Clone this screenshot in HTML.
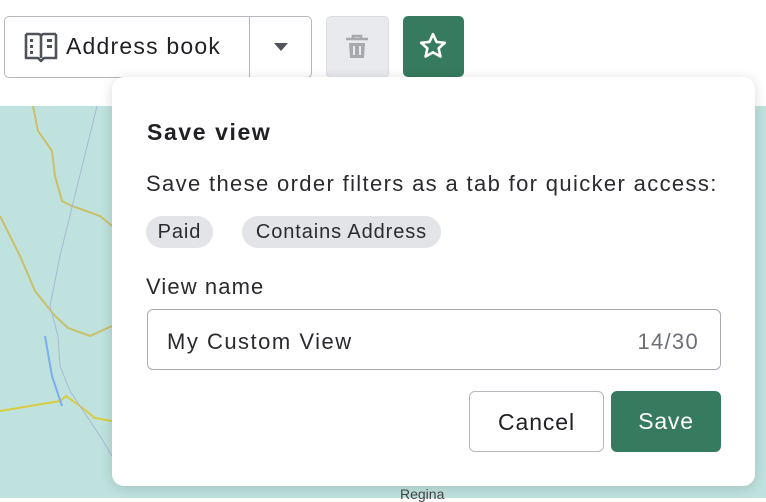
<!DOCTYPE html>
<html><head><style>
*{box-sizing:border-box;margin:0;padding:0}
body{width:766px;height:498px;overflow:hidden;background:#fff;font-family:"Liberation Sans",sans-serif;position:relative;color:#202124}
.map{position:absolute;left:0;top:106px;width:766px;height:392px;background:#bfe2de}
.btn{position:absolute;border-radius:5px}
.pop{position:absolute;left:112px;top:77px;width:643px;height:409px;background:#fff;border-radius:12px;box-shadow:0 2px 12px rgba(0,0,0,.15)}
.t{position:absolute;white-space:nowrap}
.chip{position:absolute;top:139px;height:32px;background:#e3e4e8;border-radius:16px;font-size:20px;line-height:32px;text-align:center;color:#2a2b2e;letter-spacing:0.9px}
</style></head><body>
<div class="map">
<svg width="766" height="392" style="position:absolute;left:0;top:0">
<path d="M33 0 L38 25 L52 45 L55 70 L62 95 L72 100 L100 110 L112 120" stroke="#c9c068" stroke-width="2" fill="none"/>
<path d="M0 110 L20 150 L35 185 L55 210 L68 222 L90 230 L112 220" stroke="#c9c068" stroke-width="2" fill="none"/>
<path d="M0 305 L30 300 L60 295 L66 290 L80 300 L95 312 L112 315" stroke="#d9cc40" stroke-width="2" fill="none"/>
<path d="M97 0 L60 150 L50 200 L58 230 L60 260 L70 285 L80 300 L100 330 L112 350" stroke="#a9b8d8" stroke-width="1" fill="none"/>
<path d="M45 230 L52 270 L62 300" stroke="#7aaef0" stroke-width="2" fill="none"/>
</svg>
</div>
<div class="btn" style="left:4px;top:16px;width:308px;height:62px;border:1px solid #b6b8bf;background:#fff"></div>
<div style="position:absolute;left:249px;top:17px;width:1px;height:60px;background:#b6b8bf"></div>
<svg style="position:absolute;left:24px;top:31px" width="34" height="34" viewBox="0 0 34 34">
<path d="M2 3h12c2 0 3 1 3 3v21M32 3H20c-2 0-3 1-3 3M2 3v24h12l3 3 3-3h12V3" stroke="#50535a" stroke-width="2.6" fill="none" stroke-linejoin="round"/>
<rect x="6" y="8" width="3" height="3" fill="#50535a"/><rect x="6" y="14" width="3" height="3" fill="#50535a"/><rect x="6" y="20" width="3" height="3" fill="#50535a"/>
<rect x="23" y="8" width="5" height="3" fill="#50535a"/><rect x="23" y="14" width="5" height="3" fill="#50535a"/>
</svg>
<div class="t" style="left:66px;top:33px;font-size:23px;letter-spacing:1.2px;color:#202124">Address book</div>
<svg style="position:absolute;left:274px;top:43px" width="14" height="8"><path d="M0 0h14L7 8z" fill="#50535a"/></svg>
<div class="btn" style="left:326px;top:16px;width:63px;height:62px;background:#e9eaee;border:1px solid #dcdde2"></div>
<svg style="position:absolute;left:345px;top:34px" width="24" height="26" viewBox="0 0 24 26"><path d="M1 5h22M8 5V2h8v3" stroke="#a7a9af" stroke-width="2.5" fill="none"/><path d="M4 9h16l-1 15H5z" fill="#a7a9af"/><path d="M9 12v9M15 12v9" stroke="#e9eaee" stroke-width="2"/></svg>
<div class="btn" style="left:403px;top:16px;width:61px;height:61px;background:#367b5f"></div>
<svg style="position:absolute;left:419px;top:32px" width="28" height="28" viewBox="0 0 26 26"><path d="M13 2l3.3 7.2 7.7.8-5.8 5.2 1.7 7.6L13 18.9 6.1 22.8l1.7-7.6L2 10l7.7-.8z" stroke="#fff" stroke-width="2.4" fill="none" stroke-linejoin="round"/></svg>
<div class="pop">
<div class="t" style="left:35px;top:42px;font-size:23px;letter-spacing:1.6px;font-weight:bold;color:#202124">Save view</div>
<div class="t" style="left:34px;top:94px;font-size:22px;letter-spacing:1.35px;color:#2a2b2e">Save these order filters as a tab for quicker access:</div>
<div class="chip" style="left:34px;width:67px">Paid</div>
<div class="chip" style="left:130px;width:199px">Contains Address</div>
<div class="t" style="left:34px;top:197px;font-size:22px;letter-spacing:1.1px;color:#2a2b2e">View name</div>
<div style="position:absolute;left:35px;top:232px;width:574px;height:61px;border:1px solid #a9abb2;border-radius:6px"></div>
<div class="t" style="left:55px;top:252px;font-size:22px;letter-spacing:1.5px;color:#2a2b2e">My Custom View</div>
<div class="t" style="right:56px;top:252px;font-size:22px;letter-spacing:1.3px;color:#6c6f76">14/30</div>
<div style="position:absolute;left:357px;top:314px;width:135px;height:61px;border:1px solid #b6b8bf;border-radius:6px;font-size:23px;letter-spacing:0.9px;line-height:60px;text-align:center">Cancel</div>
<div style="position:absolute;left:499px;top:314px;width:110px;height:61px;background:#367b5f;border-radius:6px;font-size:23px;letter-spacing:0.8px;line-height:61px;text-align:center;color:#fff">Save</div>
</div>
<div class="t" style="left:400px;top:486px;font-size:14px;color:#444">Regina</div>
</body></html>
